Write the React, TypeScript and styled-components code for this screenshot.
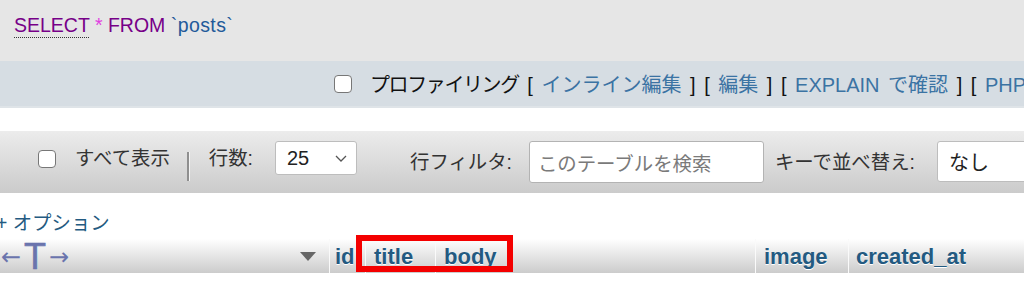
import React from "react";
import styled, { createGlobalStyle } from "styled-components";

const Global = createGlobalStyle`
  html, body { margin: 0; padding: 0; background: #fff; }
  body {
    width: 1024px;
    height: 283px;
    overflow: hidden;
    font-family: "Liberation Sans", "Noto Sans CJK JP", sans-serif;
    color: #222;
  }
`;

const Page = styled.div`
  display: flex;
  flex-direction: column;
  width: 1024px;
  height: 283px;
  overflow: hidden;
`;

const SqlBar = styled.div`
  flex: none;
  height: 61px;
  box-sizing: border-box;
  background: #e6e6e6;
  padding: 11px 14px 0;
  font-size: 19.5px;
  line-height: 28px;
  white-space: nowrap;
`;

const Kw = styled.span<{ $dotted?: boolean }>`
  color: #770088;
  text-decoration: ${(p) => (p.$dotted ? "underline dotted #333" : "none")};
  text-decoration-thickness: 1px;
  text-underline-offset: 5px;
`;

const Star = styled.span`
  color: #e13ee1;
`;

const Ident = styled.span`
  color: #235a9a;
  letter-spacing: 0.4px;
`;

const ProfileBar = styled.div`
  flex: none;
  height: 47px;
  box-sizing: border-box;
  background: #d6dde3;
  border-bottom: 2px solid #dfe4e8;
  display: flex;
  align-items: center;
  gap: 18px;
  padding-left: 334px;
  white-space: nowrap;
  overflow: hidden;
  font-size: 20px;
`;

const Box = styled.span`
  flex: none;
  display: inline-block;
  width: 18px;
  height: 18px;
  box-sizing: border-box;
  border: 1.5px solid #777;
  border-radius: 4px;
  background: #fff;
`;

const BandText = styled.span`
  flex: none;
  color: #111;
  word-spacing: 3px;
`;

const Tight = styled.span`
  letter-spacing: -1.4px;
`;

const Link = styled.span`
  color: #3b73a3;
`;

const Spacer = styled.div<{ $h: number }>`
  flex: none;
  height: ${(p) => p.$h}px;
`;

const Toolbar = styled.div`
  flex: none;
  height: 62px;
  box-sizing: border-box;
  background: linear-gradient(#ececec, #cbcbcb);
  display: flex;
  align-items: flex-start;
  padding: 10px 0 0 38px;
  gap: 17px;
  white-space: nowrap;
  overflow: hidden;
  font-size: 19.4px;
  color: #333;
  & > * {
    flex: none;
  }
`;

const ToolBox = styled(Box)`
  margin-top: 9px;
  margin-right: 2px;
`;

const ToolLabel = styled.span<{ $lh: number; $ml?: number }>`
  line-height: ${(p) => p.$lh}px;
  margin-left: ${(p) => p.$ml ?? 0}px;
  color: #333;
`;

const Separator = styled.span`
  width: 2px;
  height: 29px;
  margin-top: 11px;
  background: #8f8f8f;
  box-shadow: 1px 0 0 #f4f4f4;
`;

const SelectBox = styled.div<{ $w: number; $h: number; $ml?: number }>`
  width: ${(p) => p.$w}px;
  height: ${(p) => p.$h}px;
  margin-left: ${(p) => p.$ml ?? 0}px;
  box-sizing: border-box;
  background: #fff;
  border: 1px solid #bdbdbd;
  border-radius: 3px;
  display: flex;
  align-items: center;
  justify-content: space-between;
  padding: 0 9px 0 11px;
  font-size: 20px;
  color: #222;
`;

const FilterInput = styled.div`
  width: 235px;
  height: 42px;
  box-sizing: border-box;
  background: #fff;
  border: 1px solid #b3b3b3;
  border-radius: 3px;
  display: flex;
  align-items: center;
  padding-left: 8px;
  color: #7a7a7a;
  font-size: 19.4px;
`;

const Options = styled.div`
  flex: none;
  height: 46px;
  box-sizing: border-box;
  padding-top: 17px;
  line-height: 26px;
  font-size: 19.4px;
  white-space: nowrap;
`;

const OptLink = styled.span`
  margin-left: -4px;
  color: #235a81;
`;

const HeaderRow = styled.div`
  flex: none;
  position: relative;
  height: 34px;
  display: flex;
  background: linear-gradient(#ffffff, #cccccc);
  white-space: nowrap;
`;

const Col = styled.div<{ $w: number; $pl: number; $border?: boolean }>`
  flex: none;
  width: ${(p) => p.$w}px;
  box-sizing: border-box;
  padding: 2px 0 0 ${(p) => p.$pl}px;
  border-left: ${(p) => (p.$border ? "1px solid #fafafa" : "none")};
  font-size: 22px;
  font-weight: bold;
  line-height: 32px;
  color: #235a81;
  text-shadow: 0 1px 0 #fff;
`;

const FirstCol = styled.div`
  flex: none;
  width: 329px;
  box-sizing: border-box;
  display: flex;
  align-items: center;
  justify-content: space-between;
  padding: 0 13px 0 1px;
  color: #6a74ad;
`;

const Arrows = styled.span`
  display: flex;
  align-items: center;
  font-family: "DejaVu Sans", sans-serif;
  font-size: 24px;
  line-height: 34px;
  padding-top: 2px;
`;

const BigT = styled.span`
  font-family: "Liberation Sans", sans-serif;
  font-size: 36px;
  margin: 0 3px;
  line-height: 34px;
  -webkit-text-stroke: 0.6px #6a74ad;
`;

const Highlight = styled.div`
  position: absolute;
  left: 356px;
  top: -4px;
  width: 157px;
  height: 37px;
  box-sizing: border-box;
  border: 6px solid #f40000;
  pointer-events: none;
`;

const NextRow = styled.div`
  flex: none;
  padding: 8px 0 0 487px;
  font-size: 19px;
  line-height: 26px;
  color: #8d8d8d;
  white-space: nowrap;
`;

const Chevron = () => (
  <svg width="12" height="7" viewBox="0 0 12 7">
    <polyline points="1,1 6,6 11,1" fill="none" stroke="#555" strokeWidth="1.3" />
  </svg>
);

const Triangle = () => (
  <svg width="16" height="9" viewBox="0 0 16 9">
    <polygon points="0,0 16,0 8,9" fill="#666" />
  </svg>
);

export default function App() {
  return (
    <>
      <Global />
      <Page>
        <SqlBar>
          <Kw $dotted>SELECT</Kw> <Star>*</Star> <Kw>FROM</Kw> <Ident>`posts`</Ident>
        </SqlBar>
        <ProfileBar>
          <Box />
          <BandText>
            <Tight>プロファイリング</Tight> [ <Link>インライン編集</Link> ] [ <Link>編集</Link> ] [{" "}
            <Link>EXPLAIN で確認</Link> ] [ <Link>PHP コードの作成</Link> ] [{" "}
            <Link>再描画</Link> ]
          </BandText>
        </ProfileBar>
        <Spacer $h={23} />
        <Toolbar>
          <ToolBox />
          <ToolLabel $lh={34}>すべて表示</ToolLabel>
          <Separator />
          <ToolLabel $lh={34} $ml={3}>行数:</ToolLabel>
          <SelectBox $w={82} $h={34} $ml={5}>
            <span>25</span>
            <Chevron />
          </SelectBox>
          <ToolLabel $lh={42} $ml={36}>行フィルタ:</ToolLabel>
          <FilterInput>このテーブルを検索</FilterInput>
          <ToolLabel $lh={42} $ml={-6}>キーで並べ替え:</ToolLabel>
          <SelectBox $w={200} $h={41} $ml={5}>
            <span>なし</span>
          </SelectBox>
        </Toolbar>
        <Options>
          <OptLink>+ オプション</OptLink>
        </Options>
        <HeaderRow>
          <FirstCol>
            <Arrows>
              ←<BigT>T</BigT>→
            </Arrows>
            <Triangle />
          </FirstCol>
          <Col $w={36} $pl={5} $border>id</Col>
          <Col $w={70} $pl={8} $border>title</Col>
          <Col $w={320} $pl={8} $border>body</Col>
          <Col $w={93} $pl={8} $border>image</Col>
          <Col $w={176} $pl={7} $border>created_at</Col>
          <Highlight />
        </HeaderRow>
        <NextRow>ダブルクリックで編集</NextRow>
      </Page>
    </>
  );
}
